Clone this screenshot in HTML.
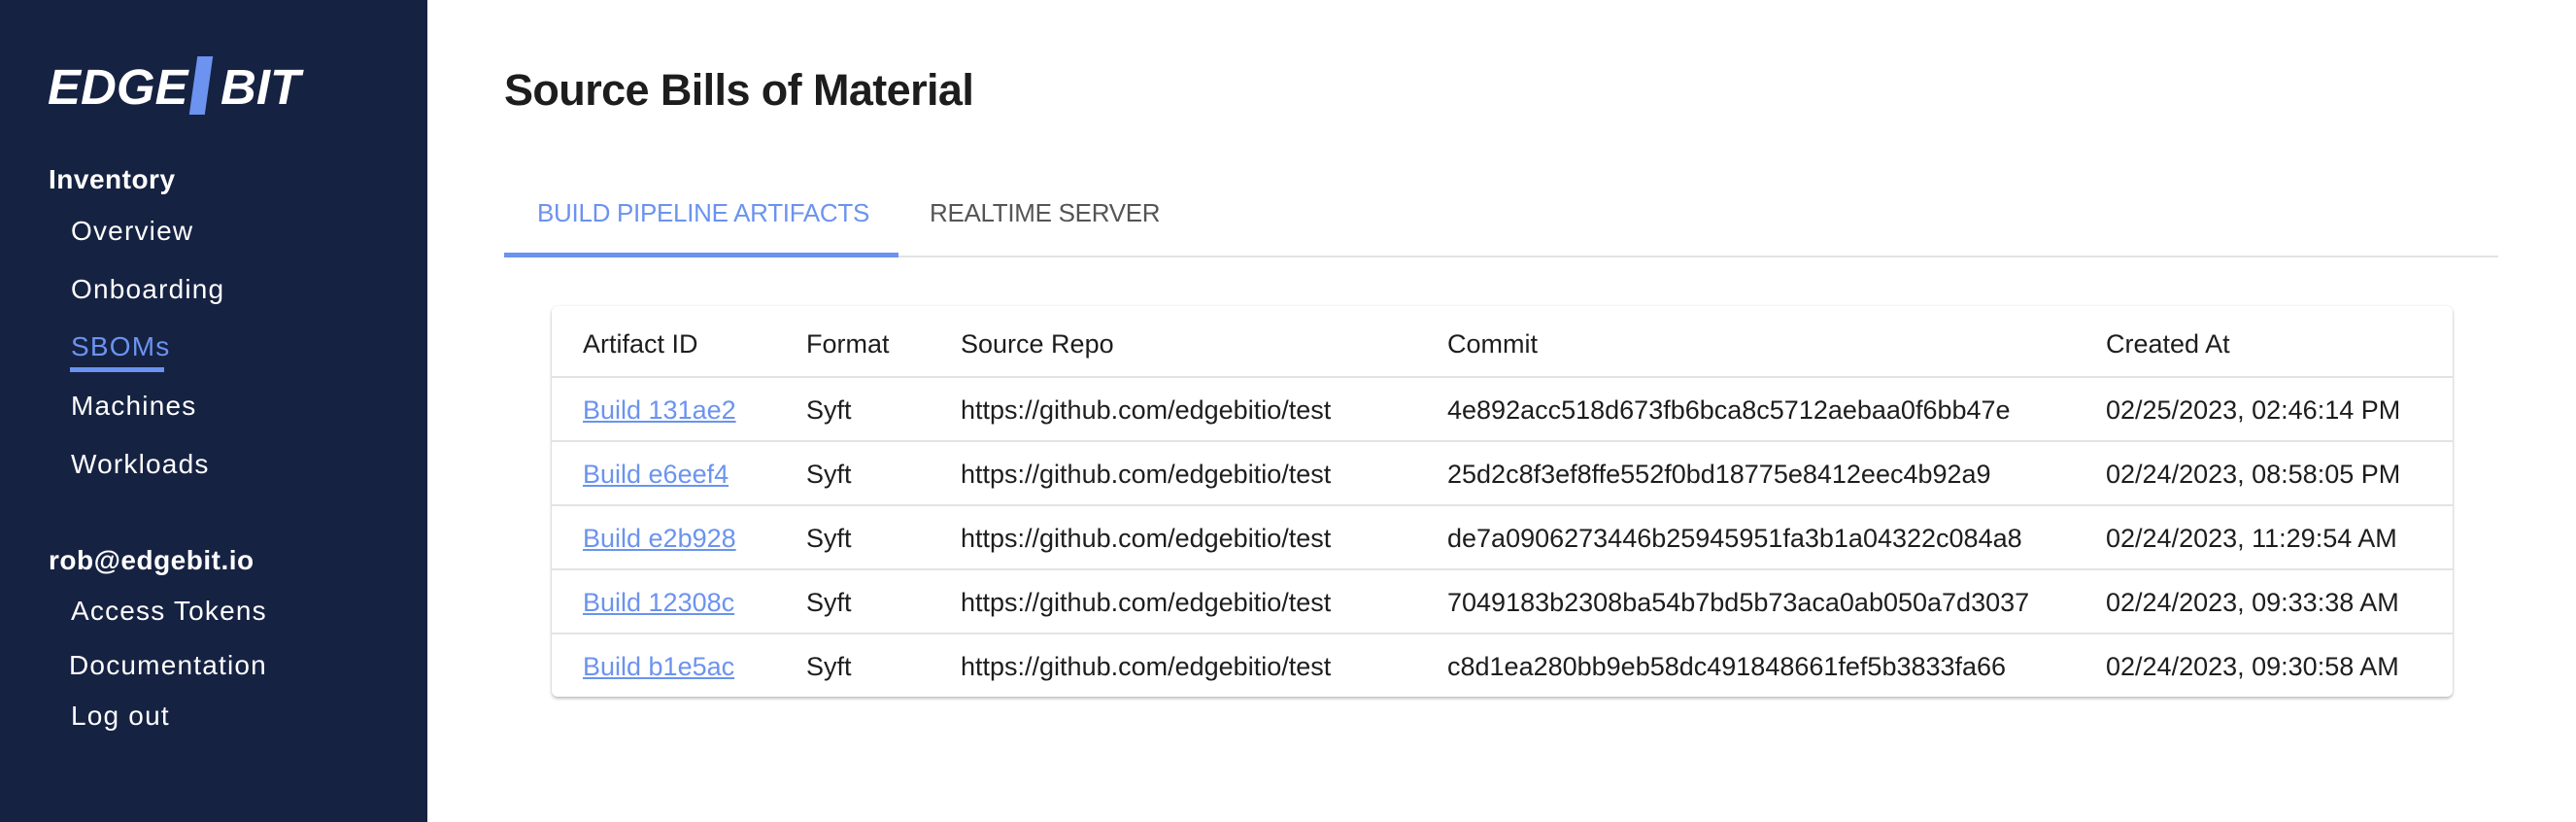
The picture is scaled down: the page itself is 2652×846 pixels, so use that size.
<!DOCTYPE html>
<html><head><meta charset="utf-8"><style>
*{margin:0;padding:0;box-sizing:border-box}
body{width:2652px;height:846px;overflow:hidden;background:#fff;font-family:"Liberation Sans",sans-serif;position:relative}
#sb{position:absolute;left:0;top:0;width:440px;height:846px;background:#162242;color:#fff}
.a{position:absolute;white-space:nowrap;line-height:1}
.logo{top:64px;font-size:51px;font-style:italic;font-weight:bold;color:#fff}
.bar{position:absolute;left:199px;top:58px;width:16px;height:60px;background:#6b93ef;transform:skewX(-8deg)}
.h{font-size:28px;font-weight:bold;left:50px;letter-spacing:.5px}
.i{font-size:28px;left:73px;letter-spacing:1.2px}
.title{left:519px;top:70px;font-size:45px;font-weight:bold;letter-spacing:-0.6px;color:#1d1d1d}
.tab{top:206px;font-size:26px;letter-spacing:-0.3px}
#card{position:absolute;left:568px;top:315px;width:1957px;height:402px;background:#fff;border-radius:6px;box-shadow:0 2px 3px rgba(0,0,0,.25),0 0 2px rgba(0,0,0,.08)}
.row{position:absolute;left:0;width:1957px;height:66px;border-top:2px solid #e3e3e3}
.c{position:absolute;top:20px;font-size:27px;white-space:nowrap;color:#1d1d1d;line-height:1}
.lnk{color:#6b93ef;text-decoration:underline}
</style></head><body>
<div id="sb">
<div class="a logo" style="left:49px">EDGE</div>
<div class="bar"></div>
<div class="a logo" style="left:227px">BIT</div>
<div class="a h" style="top:171px">Inventory</div>
<div class="a i" style="top:224px">Overview</div>
<div class="a i" style="top:284px">Onboarding</div>
<div class="a i" style="top:343px;color:#6b93ef">SBOMs</div>
<div style="position:absolute;left:72px;top:378px;width:97px;height:5px;background:#6b93ef"></div>
<div class="a i" style="top:404px">Machines</div>
<div class="a i" style="top:464px">Workloads</div>
<div class="a h" style="top:563px">rob@edgebit.io</div>
<div class="a i" style="top:615px">Access Tokens</div>
<div class="a i" style="top:671px;left:71px">Documentation</div>
<div class="a i" style="top:723px">Log out</div>
</div>
<div class="a title">Source Bills of Material</div>
<div class="a tab" style="left:553px;color:#6b93ef">BUILD PIPELINE ARTIFACTS</div>
<div class="a tab" style="left:957px;color:#555">REALTIME SERVER</div>
<div style="position:absolute;left:519px;top:263px;width:2053px;height:2px;background:#e3e3e3"></div>
<div style="position:absolute;left:519px;top:260px;width:406px;height:5px;background:#6b93ef"></div>
<div id="card">
<div class="row" style="top:0;border-top:none;height:73px">
<div class="c" style="left:32px;top:26px">Artifact ID</div><div class="c" style="left:262px;top:26px">Format</div><div class="c" style="left:421px;top:26px">Source Repo</div><div class="c" style="left:922px;top:26px">Commit</div><div class="c" style="left:1600px;top:26px">Created At</div></div>
<div class="row" style="top:72px"><div class="c lnk" style="left:32px">Build 131ae2</div><div class="c" style="left:262px">Syft</div><div class="c" style="left:421px">https://github.com/edgebitio/test</div><div class="c" style="left:922px">4e892acc518d673fb6bca8c5712aebaa0f6bb47e</div><div class="c" style="left:1600px">02/25/2023, 02:46:14 PM</div></div>
<div class="row" style="top:138px"><div class="c lnk" style="left:32px">Build e6eef4</div><div class="c" style="left:262px">Syft</div><div class="c" style="left:421px">https://github.com/edgebitio/test</div><div class="c" style="left:922px">25d2c8f3ef8ffe552f0bd18775e8412eec4b92a9</div><div class="c" style="left:1600px">02/24/2023, 08:58:05 PM</div></div>
<div class="row" style="top:204px"><div class="c lnk" style="left:32px">Build e2b928</div><div class="c" style="left:262px">Syft</div><div class="c" style="left:421px">https://github.com/edgebitio/test</div><div class="c" style="left:922px">de7a0906273446b25945951fa3b1a04322c084a8</div><div class="c" style="left:1600px">02/24/2023, 11:29:54 AM</div></div>
<div class="row" style="top:270px"><div class="c lnk" style="left:32px">Build 12308c</div><div class="c" style="left:262px">Syft</div><div class="c" style="left:421px">https://github.com/edgebitio/test</div><div class="c" style="left:922px">7049183b2308ba54b7bd5b73aca0ab050a7d3037</div><div class="c" style="left:1600px">02/24/2023, 09:33:38 AM</div></div>
<div class="row" style="top:336px"><div class="c lnk" style="left:32px">Build b1e5ac</div><div class="c" style="left:262px">Syft</div><div class="c" style="left:421px">https://github.com/edgebitio/test</div><div class="c" style="left:922px">c8d1ea280bb9eb58dc491848661fef5b3833fa66</div><div class="c" style="left:1600px">02/24/2023, 09:30:58 AM</div></div>
</div>
</body></html>
